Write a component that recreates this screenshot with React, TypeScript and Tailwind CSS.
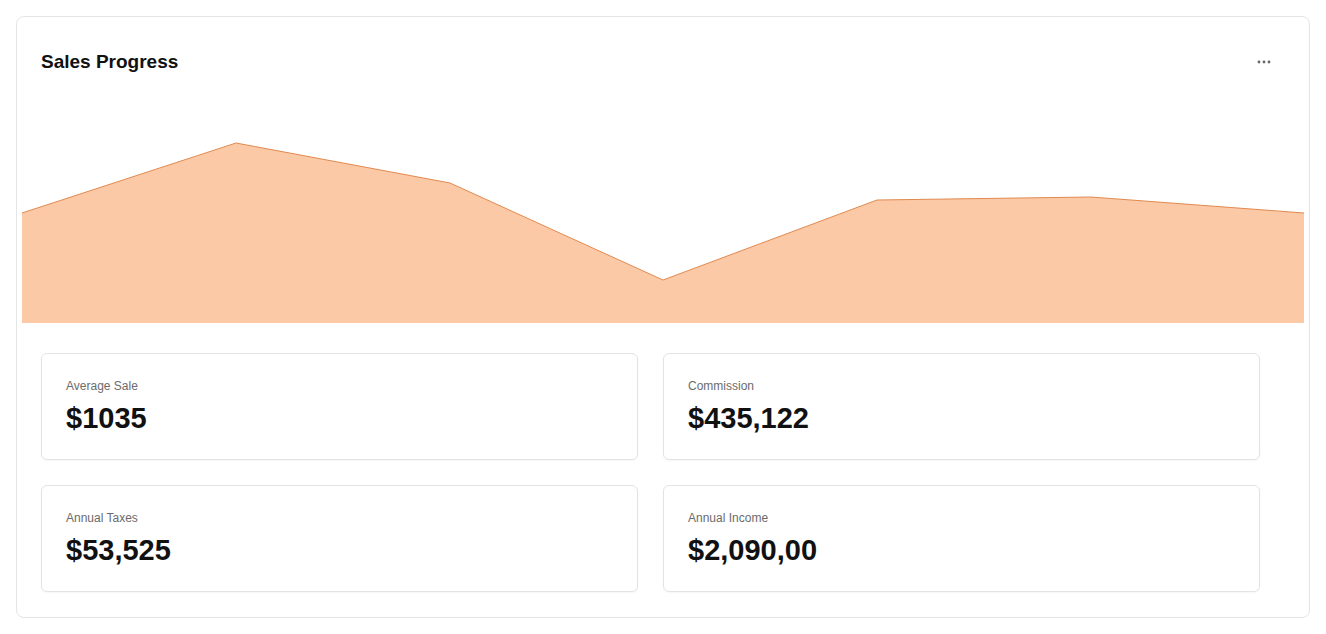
import React from "react";

const stats = [
  { label: "Average Sale", value: "$1035" },
  { label: "Commission", value: "$435,122" },
  { label: "Annual Taxes", value: "$53,525" },
  { label: "Annual Income", value: "$2,090,00" },
];

// chart points in a 1282 x 238 box
const pts: [number, number][] = [
  [0, 128],
  [214, 58],
  [428, 98],
  [641, 195],
  [855, 115],
  [1069, 112],
  [1282, 128],
];

function Chart() {
  const line = pts.map((p) => p.join(",")).join(" ");
  const area = `0,238 ${line} 1282,238`;
  return (
    <svg viewBox="0 0 1282 238" width="1282" height="238" className="block">
      <polygon points={area} fill="#fbc9a6" />
      <polyline points={line} fill="none" stroke="#e08a50" strokeWidth="1" />
    </svg>
  );
}

export default function App() {
  return (
    <div className="p-4 bg-white" style={{ fontFamily: '"Liberation Sans", Arial, sans-serif' }}>
      <div className="border border-[#e5e5e5] rounded-lg bg-white">
        <div className="flex items-center justify-between pl-6 pr-[38px] pt-[31px]">
          <h2 className="text-[19px] leading-7 font-bold text-[#111]">Sales Progress</h2>
          <svg width="14" height="4" viewBox="0 0 14 4" className="text-[#666]">
            <circle cx="2" cy="2" r="1.4" fill="currentColor" />
            <circle cx="7" cy="2" r="1.4" fill="currentColor" />
            <circle cx="12" cy="2" r="1.4" fill="currentColor" />
          </svg>
        </div>

        <div className="mt-[9px] mx-[5px]">
          <Chart />
        </div>

        <div className="grid grid-cols-[597px_597px] gap-[25px] px-6 pt-[30px] pb-[25px]">
          {stats.map((s) => (
            <div
              key={s.label}
              className="h-[107px] border border-[#e3e3e3] rounded-md shadow-[0_1px_2px_rgba(0,0,0,0.04)] px-6 pt-[24px]"
            >
              <div className="text-[12px] leading-4 text-[#6b6b6b]">{s.label}</div>
              <div className="mt-[8px] text-[29px] leading-8 font-bold text-[#111]">{s.value}</div>
            </div>
          ))}
        </div>
      </div>
    </div>
  );
}
